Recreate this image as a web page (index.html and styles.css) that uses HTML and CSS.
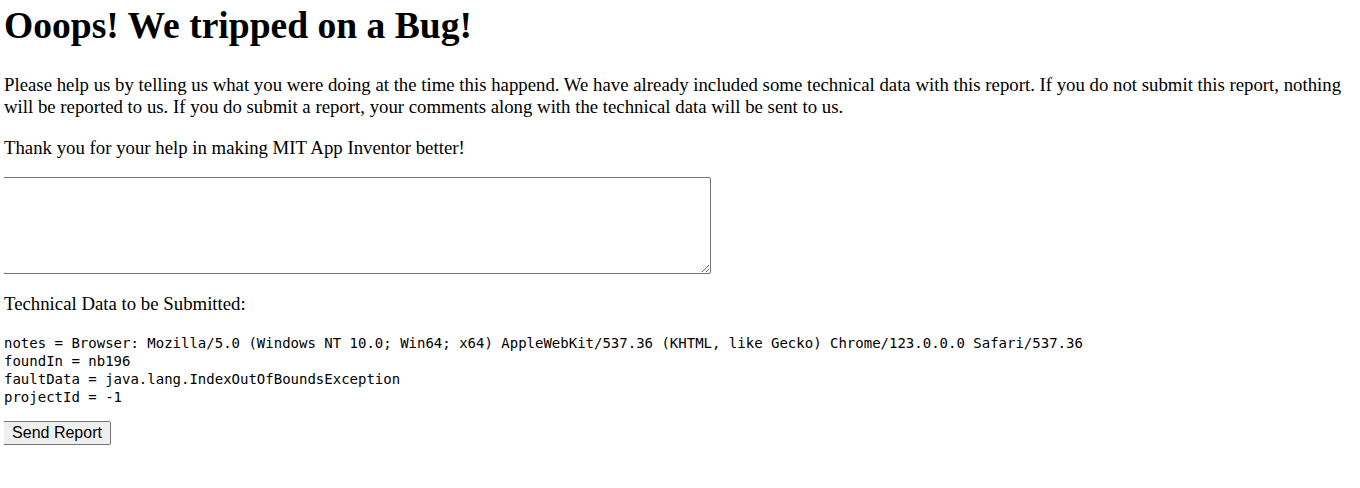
FILE: index.html
```html
<!DOCTYPE html>
<html>
<head>
<meta charset="utf-8">
<link rel="stylesheet" href="styles.css">
</head>
<body class="page">
<h1 class="title">Ooops! We tripped on a Bug!</h1>
<p class="text">Please help us by telling us what you were doing at the time this happend. We have already included some technical data with this report. If you do not submit this report, nothing will be reported to us. If you do submit a report, your comments along with the technical data will be sent to us.</p>
<p class="text thanks">Thank you for your help in making MIT App Inventor better!</p>
<textarea class="notes"></textarea>
<p class="text">Technical Data to be Submitted:</p>
<pre class="data">notes = Browser: Mozilla/5.0 (Windows NT 10.0; Win64; x64) AppleWebKit/537.36 (KHTML, like Gecko) Chrome/123.0.0.0 Safari/537.36
foundIn = nb196
faultData = java.lang.IndexOutOfBoundsException
projectId = -1</pre>
<button class="send">Send Report</button>
</body>
</html>
```
FILE: styles.css
```css
html, body { background: #fff; }
.page {
  margin: 4px;
  font-family: "Liberation Serif", serif;
  font-size: 18.8px;
  line-height: 22px;
  color: #000;
}
.title {
  font-size: 37.6px;
  line-height: 44px;
  font-weight: bold;
  margin: 0 0 26px 0;
}
.text { margin: 0 0 19px 0; }
.thanks { margin-bottom: 18px; }
.notes {
  display: block;
  width: 708px;
  height: 97px;
  box-sizing: border-box;
  margin: 0 0 19px -1px;
  border: 1px solid #767676;
  border-radius: 2px;
}
.data {
  font-family: "DejaVu Sans Mono", monospace;
  font-size: 14px;
  line-height: 18px;
  margin: 18px 0 15px 0;
}
.send {
  display: block;
  font-family: "Liberation Sans", Arial, sans-serif;
  font-size: 16px;
  line-height: 18px;
  margin-left: -1px;
  padding: 1px 6px;
  width: 108px;
  height: 24px;
  box-sizing: border-box;
  background: #efefef;
  border: 1px solid #767676;
  border-radius: 2px;
  color: #000;
}
```
